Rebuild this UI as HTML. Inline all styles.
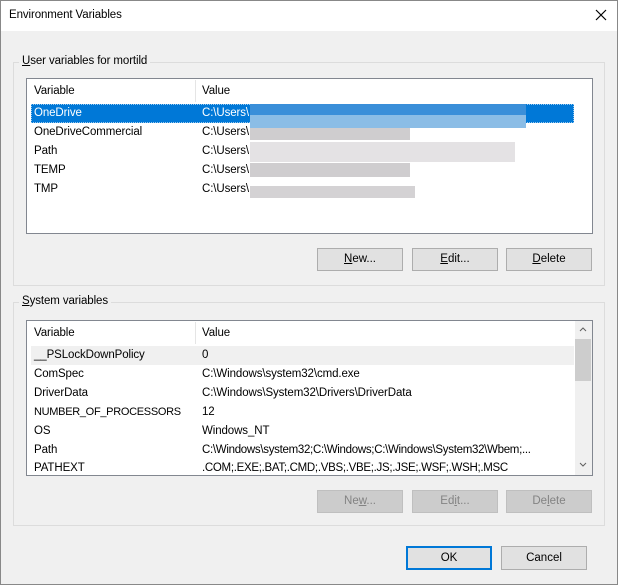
<!DOCTYPE html>
<html><head><style>
*{margin:0;padding:0;box-sizing:border-box}
body{width:618px;height:585px;background:#f0f0f0;font-family:"Liberation Sans",sans-serif;font-size:11.5px;color:#000;position:relative;overflow:hidden}
.a{position:absolute}
.win{left:0;top:0;width:618px;height:585px;border:1px solid #888}
.title{left:1px;top:1px;width:616px;height:30px;background:#fff}
.grp{border:1px solid #dcdcdc}
.lbl{background:#f0f0f0;padding:0 3px}
.list{background:#fff;border:1px solid #828790}
.t{white-space:nowrap;line-height:19px;letter-spacing:-0.1px}
.btn{background:#e1e1e1;border:1px solid #adadad;text-align:center;line-height:21px}
.dis{background:#cccccc;border-color:#bfbfbf;color:#838383}
</style></head><body>
<div class="a win"></div>
<div class="a title"></div>
<div class="a t" style="left:9px;top:6px">Environment Variables</div>
<svg class="a" style="left:595px;top:9px" width="12" height="12"><path d="M1 1L11 11M11 1L1 11" stroke="#000" stroke-width="1.2"/></svg>

<div class="a grp" style="left:13px;top:62px;width:592px;height:224px"></div>
<div class="a lbl t" style="left:19px;top:52px"><u>U</u>ser variables for mortild</div>
<div class="a list" style="left:26px;top:78px;width:567px;height:156px"></div>
<div class="a" style="left:195px;top:80px;width:1px;height:22px;background:#e5e5e5"></div>
<div class="a t" style="left:34px;top:82px">Variable</div>
<div class="a t" style="left:202px;top:82px">Value</div>
<div class="a" style="left:31px;top:104px;width:543px;height:19px;background:#0078d7;outline:1px dotted #99c9ef;outline-offset:-1px"></div>
<div class="a t" style="left:34px;top:104px;color:#fff">OneDrive</div>
<div class="a t" style="left:202px;top:104px;color:#fff">C:\Users\</div>
<div class="a" style="left:250px;top:104px;width:276px;height:11px;background:#3a8fd9"></div>
<div class="a" style="left:250px;top:115px;width:276px;height:13px;background:#8bbde6"></div>
<div class="a t" style="left:34px;top:123px">OneDriveCommercial</div>
<div class="a t" style="left:202px;top:123px">C:\Users\</div>
<div class="a" style="left:250px;top:128px;width:160px;height:12px;background:#cfcdcf"></div>
<div class="a t" style="left:34px;top:142px">Path</div>
<div class="a t" style="left:202px;top:142px">C:\Users\</div>
<div class="a" style="left:250px;top:142px;width:265px;height:20px;background:#e4e2e4"></div>
<div class="a t" style="left:34px;top:161px">TEMP</div>
<div class="a t" style="left:202px;top:161px">C:\Users\</div>
<div class="a" style="left:250px;top:163px;width:160px;height:14px;background:#cfcdcf"></div>
<div class="a t" style="left:34px;top:180px">TMP</div>
<div class="a t" style="left:202px;top:180px">C:\Users\</div>
<div class="a" style="left:250px;top:186px;width:165px;height:12px;background:#d4d2d4"></div>
<div class="a btn" style="left:317px;top:248px;width:86px;height:23px"><u>N</u>ew...</div>
<div class="a btn" style="left:412px;top:248px;width:86px;height:23px"><u>E</u>dit...</div>
<div class="a btn" style="left:506px;top:248px;width:86px;height:23px"><u>D</u>elete</div>

<div class="a grp" style="left:13px;top:302px;width:592px;height:224px"></div>
<div class="a lbl t" style="left:19px;top:292px"><u>S</u>ystem variables</div>
<div class="a list" style="left:26px;top:320px;width:567px;height:156px"></div>
<div class="a" style="left:195px;top:322px;width:1px;height:22px;background:#e5e5e5"></div>
<div class="a t" style="left:34px;top:324px">Variable</div>
<div class="a t" style="left:202px;top:324px">Value</div>
<div class="a" style="left:31px;top:346px;width:543px;height:19px;background:#f0f0f0"></div>
<div class="a t" style="left:34px;top:346px">__PSLockDownPolicy</div><div class="a t" style="left:202px;top:346px">0</div>
<div class="a t" style="left:34px;top:365px">ComSpec</div><div class="a t" style="left:202px;top:365px">C:\Windows\system32\cmd.exe</div>
<div class="a t" style="left:34px;top:384px">DriverData</div><div class="a t" style="left:202px;top:384px">C:\Windows\System32\Drivers\DriverData</div>
<div class="a t" style="left:34px;top:403px;font-size:11px;letter-spacing:-0.3px">NUMBER_OF_PROCESSORS</div><div class="a t" style="left:202px;top:403px">12</div>
<div class="a t" style="left:34px;top:422px">OS</div><div class="a t" style="left:202px;top:422px">Windows_NT</div>
<div class="a t" style="left:34px;top:441px">Path</div><div class="a t" style="left:202px;top:441px;letter-spacing:-0.3px">C:\Windows\system32;C:\Windows;C:\Windows\System32\Wbem;...</div>
<div class="a" style="left:27px;top:460px;width:548px;height:15px;overflow:hidden"><div class="a t" style="left:7px;top:-1px">PATHEXT</div><div class="a t" style="left:175px;top:-1px;letter-spacing:-0.3px">.COM;.EXE;.BAT;.CMD;.VBS;.VBE;.JS;.JSE;.WSF;.WSH;.MSC</div></div>
<div class="a" style="left:575px;top:321px;width:17px;height:154px;background:#f0f0f0"></div>
<div class="a" style="left:575px;top:339px;width:16px;height:42px;background:#cdcdcd"></div>
<svg class="a" style="left:579px;top:326px" width="8" height="6"><path d="M1 5L4 2L7 5" stroke="#606060" fill="none"/></svg>
<svg class="a" style="left:579px;top:462px" width="8" height="6"><path d="M1 1L4 4L7 1" stroke="#606060" fill="none"/></svg>
<div class="a btn dis" style="left:317px;top:490px;width:86px;height:23px">Ne<u>w</u>...</div>
<div class="a btn dis" style="left:412px;top:490px;width:86px;height:23px">Ed<u>i</u>t...</div>
<div class="a btn dis" style="left:506px;top:490px;width:86px;height:23px">De<u>l</u>ete</div>

<div class="a btn" style="left:406px;top:546px;width:86px;height:24px;border:2px solid #0078d7;line-height:20px">OK</div>
<div class="a btn" style="left:501px;top:546px;width:86px;height:24px;line-height:22px">Cancel</div>
</body></html>
